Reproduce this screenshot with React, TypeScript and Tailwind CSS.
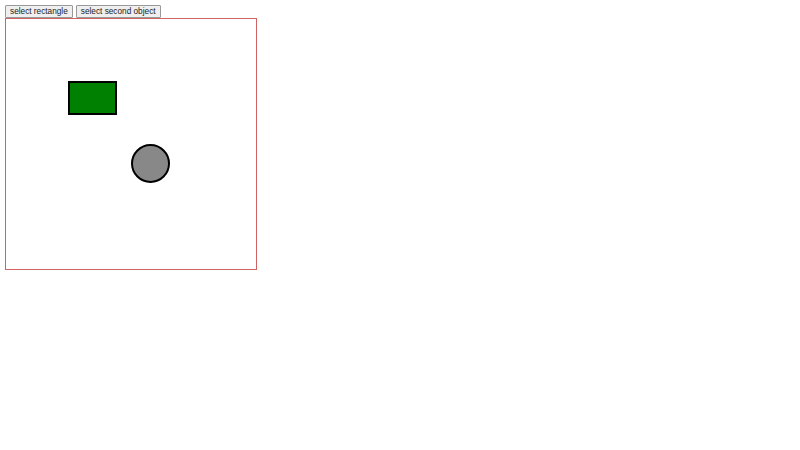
import React from "react"

export default function App() {
  return (
    <div className="w-[800px] h-[450px] bg-white p-[5px]" style={{ fontFamily: '"Liberation Sans", Arial, sans-serif' }}>
      <div className="flex gap-[3px] h-[13px]">
        <button className="h-[13px] px-[4px] text-[8.25px] leading-[11px] text-[#222] bg-[#efefef] border border-[#999] rounded-[1px]">
          select rectangle
        </button>
        <button className="h-[13px] px-[4px] text-[8.25px] leading-[11px] text-[#222] bg-[#efefef] border border-[#999] rounded-[1px]">
          select second object
        </button>
      </div>
      <div className="w-[252px] h-[252px] border border-[#d06464]">
        <svg width="250" height="250" viewBox="0 0 250 250">
          <rect x="63" y="63" width="47" height="32" fill="#008000" stroke="#000" strokeWidth="2" />
          <circle cx="144.5" cy="144.5" r="18.5" fill="#888888" stroke="#000" strokeWidth="2" />
        </svg>
      </div>
    </div>
  )
}
